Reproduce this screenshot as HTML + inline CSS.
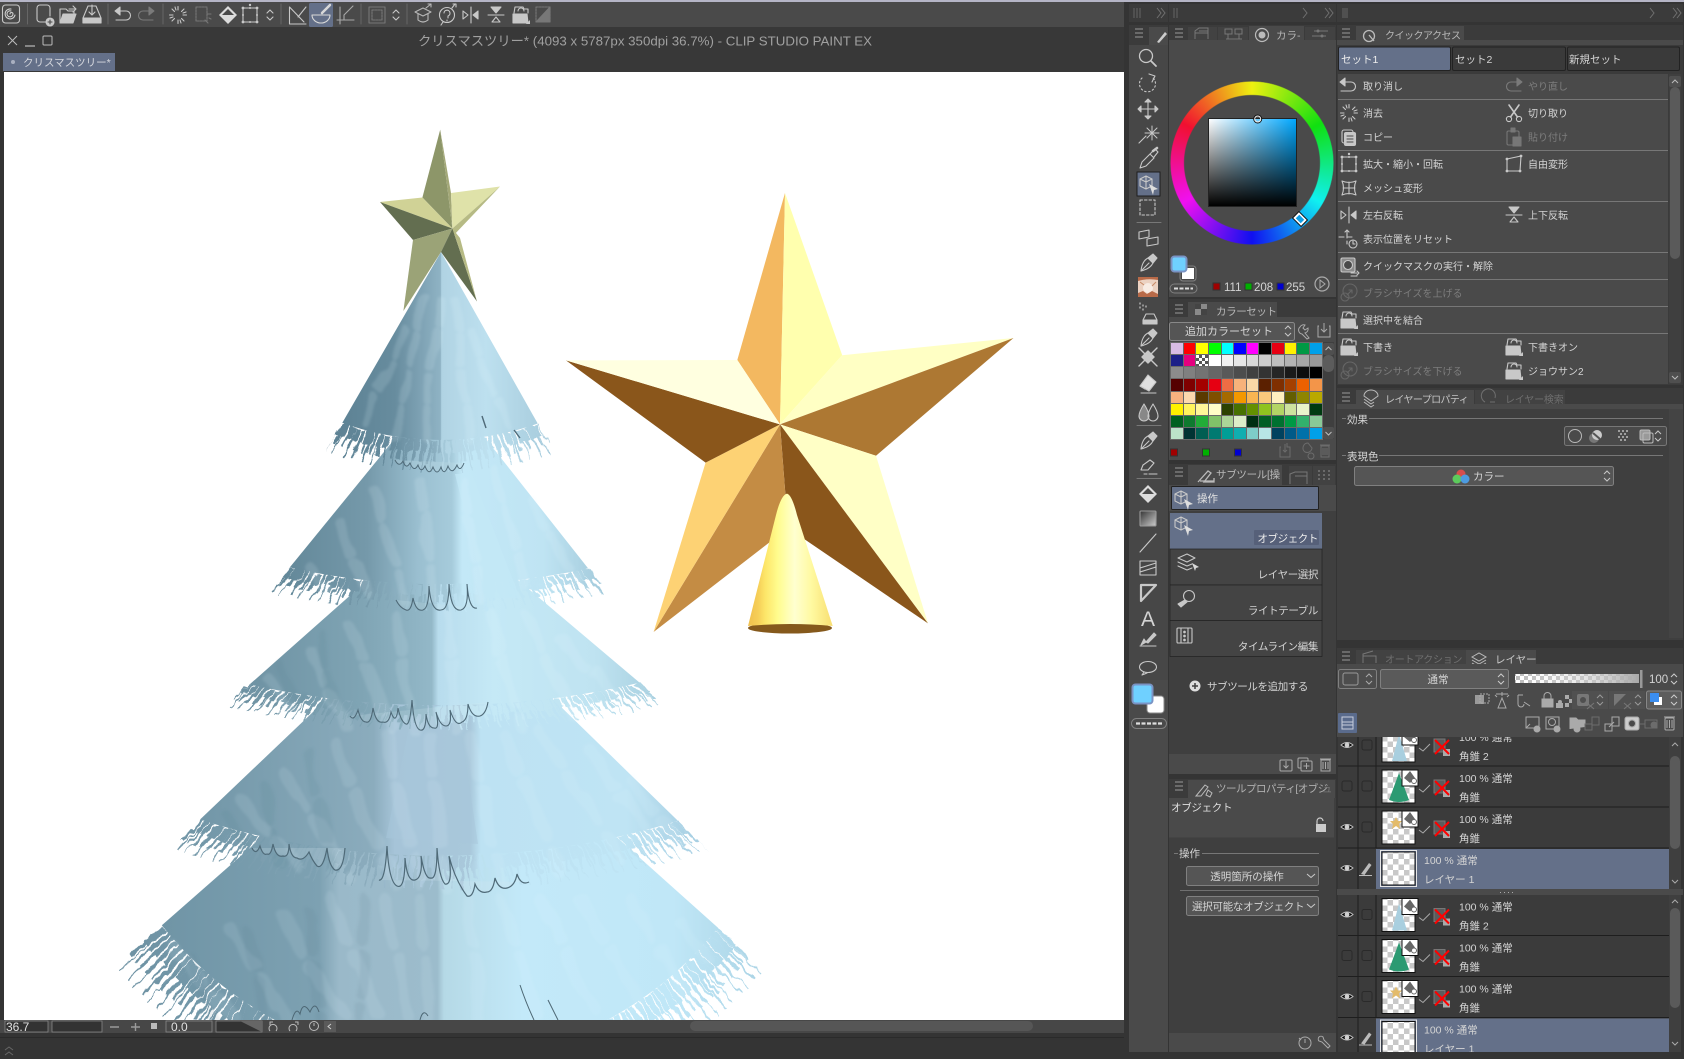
<!DOCTYPE html>
<html><head><meta charset="utf-8"><title>CLIP STUDIO PAINT EX</title>
<style>
html,body{margin:0;padding:0;background:#333;width:1684px;height:1059px;overflow:hidden}
svg{position:absolute;left:0;top:0}
text{font-family:"Liberation Sans","Noto Sans CJK JP",sans-serif;stroke:none;fill:#d4d4d4;font-size:10px}
.d{fill:#7d7d7d}.m{fill:#9a9a9a}
.wheel{position:absolute;left:1170px;top:81px;width:164px;height:164px;border-radius:50%;
background:conic-gradient(#eef010 0deg,#10e010 60deg,#10f0f0 120deg,#1010f0 180deg,#f010f0 240deg,#f01030 300deg,#eef010 360deg);
-webkit-mask:radial-gradient(circle,transparent 67.5px,#000 68.5px,#000 81px,transparent 82px);mask:radial-gradient(circle,transparent 67.5px,#000 68.5px,#000 81px,transparent 82px)}
.sq{position:absolute;left:1209px;top:119px;width:87px;height:87px;box-shadow:0 0 0 1px #222;background:linear-gradient(to top,#000,rgba(0,0,0,0)),linear-gradient(to right,#fff,#00a8ff)}
.pal{position:absolute;left:1170px;top:342px;width:153px;height:98px;background:#6a6a6a;display:grid;grid-template-columns:repeat(12,11.7px);grid-auto-rows:11.2px;gap:.95px;padding:1px;box-sizing:border-box}
.pal i{display:block}
.ck{background:conic-gradient(#555 25%,#fff 0 50%,#555 0 75%,#fff 0) 0 0/6px 6px}
</style></head><body>
<svg width="1684" height="1059" viewBox="0 0 1684 1059" xmlns="http://www.w3.org/2000/svg">
<defs>
<filter id="fth" filterUnits="userSpaceOnUse" x="90" y="240" width="720" height="800"><feTurbulence type="fractalNoise" baseFrequency="0.13 0.05" numOctaves="2" seed="7"/><feDisplacementMap in="SourceGraphic" scale="7" xChannelSelector="R" yChannelSelector="G"/></filter>
<filter id="fth2" filterUnits="userSpaceOnUse" x="90" y="240" width="720" height="800"><feTurbulence type="fractalNoise" baseFrequency="0.05 0.02" numOctaves="2" seed="3"/><feDisplacementMap in="SourceGraphic" scale="14" xChannelSelector="R" yChannelSelector="G"/><feGaussianBlur stdDeviation="1.2"/></filter>
<pattern id="chk" width="11" height="11" patternUnits="userSpaceOnUse" patternTransform="translate(1382,0)"><rect width="11" height="11" fill="#fff"/><rect width="5.5" height="5.5" fill="#c8c8c8"/><rect x="5.5" y="5.5" width="5.5" height="5.5" fill="#c8c8c8"/></pattern>
<linearGradient id="g1" gradientUnits="userSpaceOnUse" gradientTransform="translate(-441,0)" x1="326" x2="555" y1="0" y2="0"><stop offset="0" stop-color="#5b8092"/><stop offset=".3" stop-color="#678c9e"/><stop offset=".42" stop-color="#7fa3b5"/><stop offset=".5" stop-color="#8fb3c4"/><stop offset=".505" stop-color="#b0d3e3"/><stop offset=".7" stop-color="#bde0ef"/><stop offset="1" stop-color="#a4c9da"/></linearGradient>
<linearGradient id="g2" gradientUnits="userSpaceOnUse" gradientTransform="translate(-441,0)" x1="266" x2="604" y1="0" y2="0"><stop offset="0" stop-color="#5f8495"/><stop offset=".3" stop-color="#7599aa"/><stop offset=".45" stop-color="#9abfd0"/><stop offset=".55" stop-color="#a6cbdb"/><stop offset=".58" stop-color="#c3e8f7"/><stop offset=".82" stop-color="#bfe4f3"/><stop offset="1" stop-color="#a3cadb"/></linearGradient>
<linearGradient id="g3" gradientUnits="userSpaceOnUse" gradientTransform="translate(-441,0)" x1="221" x2="660" y1="0" y2="0"><stop offset="0" stop-color="#6a8e9f"/><stop offset=".32" stop-color="#7fa4b4"/><stop offset=".48" stop-color="#93b8c8"/><stop offset=".495" stop-color="#b8dced"/><stop offset=".62" stop-color="#c5e9f6"/><stop offset=".85" stop-color="#bfe3f1"/><stop offset="1" stop-color="#a7cfdf"/></linearGradient>
<linearGradient id="g4" gradientUnits="userSpaceOnUse" gradientTransform="translate(-441,0)" x1="169" x2="707" y1="0" y2="0"><stop offset="0" stop-color="#6e93a4"/><stop offset=".38" stop-color="#8bacbd"/><stop offset=".42" stop-color="#a6c4d8"/><stop offset=".56" stop-color="#a9c8db"/><stop offset=".58" stop-color="#bde2f3"/><stop offset=".85" stop-color="#bfe4f4"/><stop offset="1" stop-color="#a4cce0"/></linearGradient>
<linearGradient id="g5" gradientUnits="userSpaceOnUse" gradientTransform="translate(-441,0)" x1="116" x2="772" y1="0" y2="0"><stop offset="0" stop-color="#6c91a2"/><stop offset=".31" stop-color="#7da1b2"/><stop offset=".34" stop-color="#9ab9c9"/><stop offset=".49" stop-color="#9cbccc"/><stop offset=".5" stop-color="#b5d9e6"/><stop offset=".62" stop-color="#c3e9f9"/><stop offset=".85" stop-color="#c0e7f7"/><stop offset="1" stop-color="#a8d1e3"/></linearGradient>
<clipPath id="w1"><path d="M0,0L-230,502V700H228V510Z"/></clipPath>
<clipPath id="w2"><path d="M0,0L-350,802V1000H326V772Z"/></clipPath>
<clipPath id="w3"><path d="M0,0L-440,860V1100H438V816Z"/></clipPath>
<clipPath id="w4"><path d="M0,0L-544,932V1200H532V932Z"/></clipPath>
<clipPath id="w5"><path d="M0,0L-650,544V1200H662V564Z"/></clipPath>
<linearGradient id="cone" gradientUnits="userSpaceOnUse" x1="748" x2="833" y1="0" y2="0"><stop offset="0" stop-color="#f0c04e"/><stop offset=".12" stop-color="#f6cf58"/><stop offset=".2" stop-color="#fde568"/><stop offset=".35" stop-color="#fffc8e"/><stop offset=".55" stop-color="#ffffd0"/><stop offset=".75" stop-color="#fff9a0"/><stop offset="1" stop-color="#f8de70"/></linearGradient>
<linearGradient id="grd" x1="0" y1="0" x2="1" y2="1"><stop offset="0" stop-color="#333"/><stop offset="1" stop-color="#ccc"/></linearGradient>
<linearGradient id="op" x1="0" x2="1" y1="0" y2="0"><stop offset="0" stop-color="#fff" stop-opacity="0"/><stop offset="1" stop-color="#aaa"/></linearGradient>
<pattern id="opc" width="8" height="8" patternUnits="userSpaceOnUse"><rect width="8" height="8" fill="#fff"/><rect width="4" height="4" fill="#bbb"/><rect x="4" y="4" width="4" height="4" fill="#bbb"/></pattern>
<clipPath id="cv"><rect x="4" y="72" width="1120" height="948"/></clipPath>
<clipPath id="ls1"><rect x="1338" y="737" width="346" height="152"/></clipPath>
<clipPath id="ls2"><rect x="1338" y="895" width="346" height="157"/></clipPath>

<g id="ham" stroke="#9a9a9a" fill="none"><path d="M-4,-4H4M-4,0H4M-4,4H4"/></g>
<g id="undo"><path d="M-3,-8L-8,-4L-3,0Z" fill="#c8c8c8"/><path d="M-3,-4H3A4.5,4.5 0 0 1 3,5H-7"/></g>
<g id="redo"><path d="M3,-8L8,-4L3,0Z" fill="#7a7a7a" stroke="#7a7a7a"/><path d="M3,-4H-3A4.5,4.5 0 0 0 -3,5H7" stroke="#7a7a7a"/></g>
<g id="clear"><path d="M0,-8.5V-5M0,5V8.5M-8.5,0H-5M5,0H8.5M-6,-6L-3.5,-3.5M3.5,3.5L6,6M-6,6L-3.5,3.5M3.5,-3.5L6,-6M-3,-8L-2,-5M3,8L2,5M8,-3L5,-2M-8,3L-5,2"/></g>
<g id="cut"><circle cx="-5" cy="6" r="2.6"/><circle cx="5" cy="6" r="2.6"/><path d="M-3.5,4L5,-8M3.5,4L-5,-8" stroke-width="1.6"/></g>
<g id="copy"><rect x="-7" y="-7" width="11" height="13" rx="2"/><rect x="-4.5" y="-4.5" width="11" height="13" rx="1.5" fill="#c8c8c8"/><path d="M-2,-1H4M-2,2H4M-2,5H4" stroke="#4a4a4a"/></g>
<g id="paste" stroke="#777"><rect x="-7" y="-6" width="12" height="14" rx="1.5"/><rect x="-3" y="-9" width="4" height="4" fill="#777"/><rect x="-1" y="0" width="8" height="9" fill="#777"/></g>
<g id="xf"><rect x="-7" y="-7" width="14" height="14"/><g fill="#c8c8c8" stroke="none"><circle cx="-7" cy="-7" r="1.4"/><circle cx="7" cy="-7" r="1.4"/><circle cx="-7" cy="7" r="1.4"/><circle cx="7" cy="7" r="1.4"/><circle cx="0" cy="-10" r="1.2"/><circle cx="0" cy="-7" r="1"/><circle cx="-7" cy="0" r="1"/><circle cx="7" cy="0" r="1"/><circle cx="0" cy="7" r="1"/></g></g>
<g id="ff"><path d="M-7,-5L7,-8L6,7L-7,7Z"/><g fill="#c8c8c8" stroke="none"><circle cx="-7" cy="-5" r="1.4"/><circle cx="7" cy="-8" r="1.4"/><circle cx="-7" cy="7" r="1.4"/><circle cx="6" cy="7" r="1.4"/></g></g>
<g id="mesh"><path d="M-7,-7Q0,-4 7,-7Q4,0 7,7Q0,4 -7,7Q-4,0 -7,-7ZM0,-6V6M-6,0H6"/></g>
<g id="fh"><path d="M-8,-4V4L-3,0Z"/><path d="M0,-8V8"/><path d="M7,-4V4L2,0Z" fill="#c8c8c8"/></g>
<g id="fv"><path d="M-5,-8H5L0,-2Z" fill="#c8c8c8"/><path d="M-8,0H8"/><path d="M-4,7H4L0,2Z"/></g>
<g id="rst"><path d="M-2,-9V-1M-2,-9L-4,-7M-2,-9L0,-7M-10,-2H-5M3,-2H-1M-2,2V5"/><circle cx="4" cy="5" r="4"/><path d="M4,2V5H6"/></g>
<g id="qm"><rect x="-8" y="-8" width="14" height="14" rx="1.5" fill="#8a8a8a"/><circle cx="-1" cy="-1" r="4.5" fill="#4a4a4a"/><path d="M2,7H8M8,5L10,7L8,9M2,10H8"/></g>
<g id="bu" stroke="#666"><circle cx="1" cy="-2" r="7"/><circle cx="-4" cy="4" r="4"/><path d="M-2,2L3,-3M3,-3H0M3,-3V0"/></g>
<g id="fd"><path d="M-7,-2L-6,-8H2L3,-6L7,-6V-2" /><path d="M-8,8V-1H6L7,8Z" fill="#c8c8c8"/><path d="M-3,-4a3,3 0 0 1 6,0" /><path d="M5,9L9,9L9,5Z" fill="#c8c8c8" stroke="none"/></g>
<g id="spin"><path d="M-3,-2L0,-5L3,-2M-3,2L0,5L3,2"/></g>
<g id="eye"><path d="M-6,0Q0,-5 6,0Q0,5 -6,0Z" stroke="#bdbdbd"/><circle r="2.4" fill="#d0d0d0" stroke="none"/></g>
<g id="pen1"><path d="M-8,9Q-7,-1 -1,-4L4,1Q1,7 -8,9Z"/><path d="M-1,-4L4,-8L8,-4L4,1Z" fill="#c8c8c8"/><path d="M-8,9L0,1"/></g>
<g id="fillic"><path d="M0,-9L9,0L0,9L-9,0Z" fill="#dcdcdc" stroke="none"/><path d="M0,-6L6,0H-6Z" fill="#4a4a4a" stroke="none"/></g>
<g id="cube"><path d="M-9,-3l6,-3l6,3v7l-6,3l-6,-3zM-3,-6v13M-9,-3l6,3l6,-3"/><path d="M0,2l9,5l-4,1l-1,5z" fill="#dedede" stroke="none"/></g>
<g id="t-base"><rect x="1382" y="4" width="33" height="33" fill="url(#chk)" stroke="#111"/></g>
<g id="ov"><rect x="1402" y="4" width="16" height="16" fill="#fff" stroke="#111"/><path d="M1410,5L1415,12L1410,17L1404,12Z" fill="#666"/><circle cx="1414" cy="15" r="2.5" fill="#fff" stroke="#666"/></g>
<g id="rx"><path d="M1418,24l4,3l7,-7" stroke="#a8a8a8" transform="translate(1,-1)" fill="none"/><rect x="1434" y="14" width="11" height="13" fill="#5c5c5c" stroke="#777"/><rect x="1443" y="24" width="7" height="7" fill="#aaa" stroke="none"/><path d="M1435,15L1449,29M1449,15L1435,29" stroke="#f00" stroke-width="2" fill="none"/></g>
<g id="tr1"><path d="M1399,9L1392,36H1407Z" fill="#a9cfdf" stroke="none"/></g>
<g id="tr2"><path d="M1399,7L1389,34Q1399,38 1409,34Z" fill="#2c9a72" stroke="none"/></g>
<g id="tr3"><path d="M1396,10l2,4l4,0l-3,3l1,5l-4,-3l-4,3l1,-5l-3,-3l4,0Z" fill="#e3bb6a" stroke="none"/></g>
</defs>

<!-- base -->
<rect width="1684" height="1059" fill="#343434"/>
<rect width="1684" height="2" fill="#b5b5c6"/>
<rect y="2" width="1124" height="25" fill="#4a4a4a"/>
<rect y="27" width="1124" height="45" fill="#383838"/>
<rect x="3" y="53" width="112" height="18" fill="#647089"/>
<circle cx="13" cy="62" r="2" fill="#a9b0c0"/>
<text x="23" y="66" style="font-size:10.500px;fill:#d6d8de">クリスマスツリー*</text>
<text x="645" y="45.500" text-anchor="middle" style="font-size:13.300px;fill:#a0a0a0">クリスマスツリー* (4093 x 5787px 350dpi 36.7%)  - CLIP STUDIO PAINT EX</text>
<g stroke="#bbb" fill="none"><path d="M8,36L17,45M17,36L8,45"/><path d="M25,46H35" stroke-width="1.2"/><rect x="43" y="36" width="9" height="9" rx="1"/></g>

<!-- canvas -->
<rect x="4" y="72" width="1120" height="948" fill="#fff"/>
<g clip-path="url(#cv)">
<!-- small star -->
<g stroke="none">
<path d="M440.2,129.6L422.4,197.5L452.4,228.5Z" fill="#8d9669"/>
<path d="M440.2,129.6L451,193L452.4,228.5Z" fill="#a3a878"/>
<path d="M451,193L500,186.5L452.4,228.5Z" fill="#dfe2a9"/>
<path d="M500,186.5L453,236L452.4,228.5Z" fill="#b6ba84"/>
<path d="M380,202L422.4,197.5L452.4,228.5Z" fill="#d0d296"/>
<path d="M380,202L413,240L452.4,228.5Z" fill="#636e50"/>
<path d="M413,240L403.4,311L441,252L452.4,228.5Z" fill="#9ba377"/>
<path d="M452.4,228.5L441,252L477,301.5Z" fill="#636e50"/>
<path d="M452.4,228.5L477,301.5L460,238Z" fill="#b6ba84"/>
</g>
<!-- tree -->
<g stroke-linecap="butt" fill="none">
<!-- T5: apex 441,680 k 1.05, R 424, r0 364 -->
<g transform="translate(441,680) scale(1,1.05)"><g clip-path="url(#w5)"><circle r="364" fill="url(#g5)"/></g></g>
<g filter="url(#fth)"><g transform="translate(441,680) scale(1,1.05)"><g clip-path="url(#w5)">
<circle r="394" stroke="url(#g5)" stroke-width="60" stroke-dasharray="1 7 1.500 10 1 6 2 9"/>
<circle r="385" stroke="url(#g5)" stroke-width="42" stroke-dasharray="2.500 4 2 5 3 4.500"/>
<circle r="376" stroke="url(#g5)" stroke-width="24" stroke-dasharray="4.500 1.500 3.500 2 5.500 1.500"/>
</g></g></g>
<g filter="url(#fth2)" stroke-linecap="round">
<path d="M175,950L235,1020M230,930L290,1020M280,915L345,1020M330,900L380,1020M385,900L410,1020M420,900L430,1020M470,900L480,1020M500,900L540,1020M540,900L600,1020M580,900L650,1020M630,900L690,1000M680,925L730,985" stroke="#e4f6fd" stroke-width="12" stroke-dasharray="44 16 60 20" opacity=".1"/>
<path d="M190,960L215,1020M250,930L265,1020M310,910L320,1020M365,900L360,1020" stroke="#567c8e" stroke-width="11" stroke-dasharray="40 14" opacity=".12"/>
</g>
<path d="M292,1020q4,-14 8,-6q3,-14 10,-2q5,-12 9,0M420,1020q3,-12 8,-4M520,985q6,18 14,35M548,1000q5,10 10,20" stroke="#4d6774" stroke-width="1"/>
<!-- T4: apex 441,590 k .556, R 538, r0 478 -->
<g transform="translate(441,590) scale(1,.556)"><g clip-path="url(#w4)"><circle r="478" fill="url(#g4)"/></g></g>
<g filter="url(#fth)"><g transform="translate(441,590) scale(1,.556)"><g clip-path="url(#w4)">
<circle r="508" stroke="url(#g4)" stroke-width="60" stroke-dasharray="1 7 1.500 10 1 6 2 9"/>
<circle r="499" stroke="url(#g4)" stroke-width="42" stroke-dasharray="2.500 4 2 5 3 4.500"/>
<circle r="490" stroke="url(#g4)" stroke-width="24" stroke-dasharray="4.500 1.500 3.500 2 5.500 1.500"/>
</g></g></g>
<path d="M408,732L386,838L478,844L462,737Z" fill="#a8c6da" opacity=".55"/>
<g filter="url(#fth2)" stroke-linecap="round">
<path d="M240,800L300,868M285,770L350,880M335,745L395,885M385,735L420,885M430,735L445,885M470,735L500,880M505,735L560,870M540,730L620,860M590,750L660,850M630,780L680,845" stroke="#e4f6fd" stroke-width="12" stroke-dasharray="40 14 54 18" opacity=".11"/>
<path d="M225,815L250,850M265,785L280,865M310,755L330,870" stroke="#567c8e" stroke-width="10" stroke-dasharray="36 12" opacity=".14"/>
</g>
<path d="M252,848q4,8 8,-2q3,10 7,8q4,2 6,-10q3,14 10,12q6,2 6,-12q2,14 8,14q6,4 12,-6q3,8 8,14q6,4 10,-18q2,18 8,22q8,2 10,-22M379,880q6,2 8,-34q2,36 10,40q8,4 8,-28q2,24 10,22q8,-2 6,-24q4,24 10,22q6,2 6,-30q2,30 8,36q8,2 4,-28q6,24 18,40q6,2 8,-12q4,10 12,8q6,0 8,-14q4,12 12,10q8,-2 10,-14q4,12 12,8" stroke="#4f6a78" stroke-width="1.200" fill="#d4e9f2" fill-opacity=".22"/>
<!-- T3: apex 441,515 k .453, R 475, r0 420 -->
<g transform="translate(441,515) scale(1,.453)"><g clip-path="url(#w3)"><circle r="420" fill="url(#g3)"/></g></g>
<g filter="url(#fth)"><g transform="translate(441,515) scale(1,.453)"><g clip-path="url(#w3)">
<circle r="447" stroke="url(#g3)" stroke-width="55" stroke-dasharray="1 7 1.500 10 1 6 2 9"/>
<circle r="439" stroke="url(#g3)" stroke-width="39" stroke-dasharray="2.500 4 2 5 3 4.500"/>
<circle r="431" stroke="url(#g3)" stroke-width="22" stroke-dasharray="4.500 1.500 3.500 2 5.500 1.500"/>
</g></g></g>
<g filter="url(#fth2)" stroke-linecap="round">
<path d="M270,680L300,720M310,650L345,725M350,625L390,728M395,615L415,730M450,615L455,730M490,615L520,725M525,615L575,715M560,640L620,700" stroke="#e4f6fd" stroke-width="11" stroke-dasharray="36 12 44 14" opacity=".12"/>
<path d="M280,665L300,700M320,635L335,700" stroke="#567c8e" stroke-width="10" stroke-dasharray="30 10" opacity=".13"/>
</g>
<path d="M350,716q4,6 8,-6q3,12 8,12q5,2 7,-14q3,16 10,14q6,2 8,-10q5,14 7,-4q3,14 8,16q4,2 6,-24q2,28 8,30q6,2 6,-16q2,14 8,14q6,2 2,-16q4,14 10,14q6,0 4,-16q6,18 12,12q6,-2 6,-18q4,14 12,12q6,-2 8,-14" stroke="#4f6a78" stroke-width="1.100" fill="#d4e9f2" fill-opacity=".2"/>
<!-- T2: apex 441,382 k .535, R 428, r0 378 -->
<g transform="translate(441,382) scale(1,.535)"><g clip-path="url(#w2)"><circle r="378" fill="url(#g2)"/></g></g>
<g filter="url(#fth)"><g transform="translate(441,382) scale(1,.535)"><g clip-path="url(#w2)">
<circle r="403" stroke="url(#g2)" stroke-width="50" stroke-dasharray="1 7 1.500 10 1 6 2 9"/>
<circle r="395" stroke="url(#g2)" stroke-width="35" stroke-dasharray="2.500 4 2 5 3 4.500"/>
<circle r="388" stroke="url(#g2)" stroke-width="20" stroke-dasharray="4.500 1.500 3.500 2 5.500 1.500"/>
</g></g></g>
<path d="M455,474L486,598L520,598L472,474Z" fill="#c3e8f7" opacity=".7"/>
<g filter="url(#fth2)" stroke-linecap="round">
<path d="M310,565L330,598M340,525L370,600M375,490L405,600M420,480L432,605M465,480L480,600M495,470L530,595M530,500L575,580" stroke="#e4f6fd" stroke-width="10" stroke-dasharray="30 10 38 12" opacity=".13"/>
</g>
<path d="M396,600q4,8 10,10q5,2 7,-12q3,14 10,12q6,-2 6,-24q2,26 12,24q8,0 8,-26q2,28 12,26q8,-2 6,-26q2,26 10,24" stroke="#4f6a78" stroke-width="1.100" fill="#d4e9f2" fill-opacity=".2"/>
<!-- T1: apex 441,252 k .793, R 277, r0 237 -->
<g transform="translate(441,252) scale(1,.793)"><g clip-path="url(#w1)"><circle r="237" fill="url(#g1)"/></g></g>
<g filter="url(#fth)"><g transform="translate(441,252) scale(1,.793)"><g clip-path="url(#w1)">
<circle r="257" stroke="url(#g1)" stroke-width="40" stroke-dasharray="1 7 1.500 10 1 6 2 9"/>
<circle r="251" stroke="url(#g1)" stroke-width="28" stroke-dasharray="2.500 4 2 5 3 4.500"/>
<circle r="245" stroke="url(#g1)" stroke-width="16" stroke-dasharray="4.500 1.500 3.500 2 5.500 1.500"/>
</g></g></g>
<g filter="url(#fth2)" stroke-linecap="round">
<path d="M422,300L395,440M441,300L425,445M455,300L470,440M470,330L510,430M405,330L360,430" stroke="#e4f6fd" stroke-width="8" stroke-dasharray="26 8 32 10" opacity=".14"/>
</g>
<path d="M395,460q4,8 8,1q3,9 7,2q4,10 8,2q3,9 7,1q4,11 8,1q4,10 8,0q3,10 7,-1q4,10 9,-1q3,8 7,-2" stroke="#4f6a78" stroke-width="1" fill="#d4e9f2" fill-opacity=".2"/>
<path d="M482,416l4,12M514,430l6,8" stroke="#4f6a78" stroke-width="1.400"/>
</g>
<!-- big star -->
<g stroke="none">
<path d="M785,193L737.3,360L780,424.4Z" fill="#f3b860"/>
<path d="M785,193L842.2,355.2L780,424.4Z" fill="#ffffae"/>
<path d="M842.2,355.2L1013.5,338L780,424.4Z" fill="#ffffc4"/>
<path d="M1013.5,338L876,455.7L780,424.4Z" fill="#ad7833"/>
<path d="M876,455.7L928,623.4L780,424.4Z" fill="#ffffc6"/>
<path d="M928,623.4L788,528L780,424.4Z" fill="#8a561b"/>
<path d="M653.6,632L788,528L780,424.4Z" fill="#c48c44"/>
<path d="M653.6,632L705.6,462.6L780,424.4Z" fill="#fdd274"/>
<path d="M566,360.4L705.6,462.6L780,424.4Z" fill="#8a561b"/>
<path d="M566,360.4L737.3,360L780,424.4Z" fill="#ffffe0"/>
<ellipse cx="790" cy="628" rx="42" ry="5.5" fill="#85591c"/>
<path d="M787,493.6Q792,495 797,515L832.7,626Q790,622 748,626L776,515Q781,495 787,493.6Z" fill="url(#cone)"/>
</g>
</g>

<!-- status bar -->
<rect y="1020" width="1124" height="13" fill="#474747"/>
<rect y="1033" width="1124" height="4" fill="#343434"/><rect y="1037" width="1124" height="1" fill="#2a2a2a"/>
<rect x="5" y="1021" width="43" height="11" fill="#333" stroke="#888" stroke-width=".8"/>
<text x="6" y="1031" style="font-size:12px;fill:#e0e0e0">36.7</text>
<path d="M52,1021h50v11h-50z" fill="#333" stroke="#888" stroke-width=".8"/>
<text x="171" y="1031" style="font-size:12px;fill:#e0e0e0">0.0</text>
<rect x="166" y="1021" width="46" height="11" fill="none" stroke="#888" stroke-width=".8"/>
<path d="M216,1021h46v11h-46z" fill="#333" stroke="#888" stroke-width=".8"/>
<path d="M240,1021L262,1032V1021Z" fill="#666"/>
<path d="M110,1027h9M131,1027h9M135.5,1023v8" stroke="#9a9a9a" stroke-width="1.4"/>
<rect x="151" y="1023" width="6" height="6" fill="#bbb"/>
<rect x="690" y="1021" width="343" height="10" rx="5" fill="#565656"/>
<rect x="324" y="1021" width="12" height="11" fill="#5a5a5a"/>
<path d="M331,1024l-3,2.5l3,2.5" stroke="#ccc" fill="none"/>
<g fill="none" stroke="#bbb"><path d="M270,1031a4,4 0 1 1 6,0M270,1025v-3h3"/><path d="M290,1031a4,4 0 1 1 6,0M298,1025v-3h-3"/><circle cx="314" cy="1026" r="4.5"/><path d="M314,1023v3"/></g>
<path d="M5,1050l4,-3l4,3M5,1055l4,-3l4,3" stroke="#666" fill="none"/>

<!-- right base -->
<rect x="1124" y="2" width="560" height="1057" fill="#343434"/>
<rect x="1129" y="4" width="39" height="18" fill="#3b3b3b"/><rect x="1169" y="4" width="167" height="18" fill="#3b3b3b"/>
<rect x="1337" y="4" width="346" height="18" fill="#3b3b3b"/>
<path d="M1134,8v10M1137,8v10M1140,8v10M1174,8v10M1177,8v10M1343,8v10M1345,8v10M1347,8v10" stroke="#666"/>
<path d="M1157,8l4,5l-4,5M1161,8l4,5l-4,5M1303,8l4,5l-4,5M1325,8l4,5l-4,5M1329,8l4,5l-4,5M1650,8l4,5l-4,5M1673,8l4,5l-4,5M1677,8l4,5l-4,5" stroke="#707070" fill="none"/>

<!-- tool column -->
<rect x="1129" y="25" width="39" height="1027" fill="#474747"/>
<rect x="1129" y="25" width="39" height="20" fill="#3b3b3b"/>
<rect x="1149" y="27" width="19" height="18" fill="#4a4a4a"/>
<use href="#ham" x="1139" y="33"/>
<path d="M1157,42l8,-10l2,2l-8,9z" fill="#ccc"/>
<rect x="1137" y="172" width="23" height="24" fill="#647089" stroke="#1e1e1e"/>
<rect x="1129" y="680" width="39" height="372" fill="#4a4a4a"/>

<!-- color panel -->
<rect x="1169" y="25" width="167" height="272" fill="#4a4a4a"/>
<rect x="1169" y="25" width="167" height="15" fill="#3b3b3b"/>
<rect x="1188" y="27" width="29" height="13" fill="#424242"/><rect x="1218" y="27" width="30" height="13" fill="#424242"/>
<rect x="1249" y="26" width="55" height="14" fill="#4a4a4a"/><rect x="1305" y="27" width="30" height="13" fill="#424242"/>
<use href="#ham" x="1179" y="33"/>
<g fill="none" stroke="#777"><path d="M1195,39v-8l4,-3h9v11M1199,31h9M1195,33h13"/><path d="M1225,29h7v5h-7zM1235,29h7v5h-7zM1228,34v5M1239,34v5M1226,39h16"/><path d="M1314,31h14M1312,36h14"/><circle cx="1318" cy="31" r="1"/><circle cx="1322" cy="36" r="1"/></g>
<circle cx="1262" cy="35" r="6.5" fill="none" stroke="#bbb" stroke-width="1.2"/><circle cx="1262" cy="35" r="3.5" fill="#bbb"/>
<text x="1276" y="39" style="font-size:10.5px;fill:#b4b4b4">カラ-</text>
<!-- swatches -->
<rect x="1180" y="266" width="16" height="15" rx="3" fill="none" stroke="#808080"/><rect x="1182" y="268" width="12" height="11" fill="#fff"/>
<rect x="1171.5" y="256.5" width="15" height="15" rx="3" fill="#6fd0ff" stroke="#7a93c4" stroke-width="2"/>
<rect x="1170" y="284" width="27" height="9" rx="4.5" fill="none" stroke="#808080"/><path d="M1174,288.5h19" stroke="#ddd" stroke-width="2" stroke-dasharray="4 1.5"/>
<rect x="1213" y="283" width="7" height="7" fill="#a00000" stroke="#333"/><rect x="1245" y="283" width="7" height="7" fill="#00b000" stroke="#333"/><rect x="1277" y="283" width="7" height="7" fill="#0000d0" stroke="#333"/>
<text x="1224" y="291" style="font-size:11.5px">111</text><text x="1254" y="291" style="font-size:11.5px">208</text><text x="1286" y="291" style="font-size:11.5px">255</text>
<circle cx="1322" cy="284" r="7" fill="none" stroke="#aaa" stroke-width="1.2"/><path d="M1320,280l5,4l-5,4z" fill="none" stroke="#aaa"/>

<!-- color set -->
<rect x="1169" y="299" width="167" height="161" fill="#4a4a4a"/>
<rect x="1169" y="299" width="167" height="18" fill="#3b3b3b"/>
<rect x="1188" y="302" width="89" height="15" fill="#4a4a4a"/>
<use href="#ham" x="1179" y="309"/>
<rect x="1195" y="304" width="12" height="11" fill="#8a8a8a"/><rect x="1195" y="304" width="6" height="5" fill="#444"/><rect x="1201" y="309" width="6" height="6" fill="#444"/>
<text x="1216" y="315" style="font-size:10.5px;fill:#b8b8b8;letter-spacing:-.4px">カラーセット</text>
<rect x="1169.5" y="322.5" width="125" height="18" rx="2" fill="#555" stroke="#888"/>
<text x="1185" y="335" style="font-size:11px">追加カラーセット</text>
<use href="#spin" x="1288" y="331" stroke="#c8c8c8" fill="none"/>
<g fill="none" stroke="#aaa"><path d="M1300,327a4,4 0 0 1 5,-2l-2,3l2,2l3,-2a4,4 0 0 1 -3,5l4,5l-2,1l-5,-5a4,4 0 0 1 -2,-7z"/><path d="M1319,326h-1v11h12v-11h-1M1324,323v9M1321,329l3,3l3,-3"/></g>
<rect x="1323" y="342" width="11" height="97" fill="#3f3f3f"/>
<rect x="1323" y="343" width="11" height="12" rx="2" fill="#4f4f4f"/><rect x="1323" y="355" width="11" height="17" rx="5" fill="#5c5c5c"/><rect x="1323" y="427" width="11" height="12" rx="2" fill="#4f4f4f"/>
<path d="M1325.500,350l3,-3l3,3M1325.500,432l3,3l3,-3" stroke="#bbb" fill="none"/>
<rect x="1170.500" y="449" width="7" height="7" fill="#a00000" stroke="#333"/><rect x="1202.500" y="449" width="7" height="7" fill="#00b000" stroke="#333"/><rect x="1234.500" y="449" width="7" height="7" fill="#0000d0" stroke="#333"/>
<g fill="none" stroke="#6c6c6c"><path d="M1281,447h-1v10h10v-10h-3v-4M1285,444v8M1283,450l2,2l2,-2"/><path d="M1305,452a5,5 0 0 1 3,-9l4,5a5,5 0 0 1 -7,4z"/><circle cx="1311" cy="456" r="3"/><rect x="1321" y="446" width="8" height="11"/><path d="M1320,445h10M1323,448v7M1325,448v7M1327,448v7"/></g>

<!-- subtool -->
<rect x="1169" y="464" width="167" height="310" fill="#3f3f3f"/>
<rect x="1169" y="464" width="167" height="21" fill="#3b3b3b"/>
<rect x="1188" y="465" width="94" height="20" fill="#4a4a4a"/><rect x="1289" y="466" width="23" height="19" fill="#424242"/><rect x="1313" y="466" width="22" height="19" fill="#424242"/>
<use href="#ham" x="1179" y="472"/>
<path d="M1198,482l10,-11l3,2l-7,9h10v-4M1200,481h14" fill="none" stroke="#bbb" stroke-width="1.3"/>
<text x="1216" y="478" style="font-size:10.5px;fill:#b8b8b8;letter-spacing:-.3px">サブツール[操</text>
<g fill="none" stroke="#777"><path d="M1290,484v-10l5,-2h12v12M1295,476h12"/></g>
<g fill="#777"><circle cx="1319" cy="471" r="1"/><circle cx="1324" cy="471" r="1"/><circle cx="1329" cy="471" r="1"/><circle cx="1319" cy="475" r="1"/><circle cx="1324" cy="475" r="1"/><circle cx="1329" cy="475" r="1"/><circle cx="1319" cy="479" r="1"/><circle cx="1324" cy="479" r="1"/><circle cx="1329" cy="479" r="1"/></g>
<rect x="1169" y="485" width="167" height="26" fill="#4a4a4a"/>
<rect x="1171.500" y="486.500" width="147" height="23" rx="1" fill="#647089" stroke="#222"/>
<text x="1197" y="502" style="font-size:10.5px;fill:#e2e2e2">操作</text>
<rect x="1170" y="513" width="152" height="36" fill="#647089"/>
<rect x="1254" y="530" width="65" height="15" rx="1" fill="#566079"/>
<rect x="1170" y="549" width="152" height="36" fill="#444" stroke="#222" stroke-width=".7"/>
<rect x="1170" y="585" width="152" height="35.500" fill="#444" stroke="#222" stroke-width=".7"/>
<rect x="1170" y="620.500" width="152" height="36" fill="#444" stroke="#222" stroke-width=".7"/>
<text x="1318" y="542" text-anchor="end" style="font-size:10.5px;fill:#eee;letter-spacing:-.4px">オブジェクト</text>
<text x="1318" y="578" text-anchor="end" style="font-size:10.500px;letter-spacing:-.4px">レイヤー選択</text>
<text x="1318" y="614" text-anchor="end" style="font-size:10.500px;letter-spacing:-.4px">ライトテーブル</text>
<text x="1318" y="650" text-anchor="end" style="font-size:10.500px;letter-spacing:-.4px">タイムライン編集</text>
<circle cx="1195" cy="686" r="5.500" fill="#ddd"/><path d="M1192,686h6M1195,683v6" stroke="#3f3f3f" stroke-width="1.500"/>
<text x="1207" y="690" style="font-size:10.500px;letter-spacing:-.4px">サブツールを追加する</text>
<rect x="1169" y="754" width="167" height="20" fill="#4a4a4a"/>
<g fill="none" stroke="#aaa"><rect x="1280" y="760" width="12" height="11" rx="1"/><path d="M1286,761v7M1283.500,765.500l2.500,2.500l2.500,-2.500"/><rect x="1298" y="758" width="10" height="10" rx="1"/><rect x="1301" y="761" width="11" height="10" rx="1" fill="#4a4a4a"/><path d="M1306.500,763v6M1303.500,766h6"/><rect x="1321" y="760" width="9" height="11"/><path d="M1320,759h11M1323,762v7M1325.500,762v7M1328,762v7"/></g>

<!-- tool prop -->
<rect x="1169" y="779" width="167" height="273" fill="#3f3f3f"/>
<rect x="1169" y="779" width="167" height="19" fill="#3b3b3b"/>
<rect x="1188" y="780" width="147" height="18" fill="#4a4a4a"/>
<use href="#ham" x="1179" y="786"/>
<g fill="none" stroke="#bbb"><path d="M1196,796l9,-11l3,2l-7,9zM1208,790l4,3l-2,4l-4,-2z"/></g>
<text x="1216" y="792" style="font-size:10.500px;fill:#b0b0b0;letter-spacing:-.5px">ツールプロパティ[オブジ</text><text x="1322" y="792" style="font-size:10.500px;fill:#777">ュ</text>
<rect x="1169" y="798" width="165" height="39.500" fill="#4a4a4a"/>
<text x="1171" y="811" style="font-size:10.500px;fill:#e0e0e0;letter-spacing:-.3px">オブジェクト</text>
<rect x="1316" y="824" width="10" height="8" fill="#ccc"/><path d="M1317,824v-3a3,3 0 0 1 6,0" fill="none" stroke="#ccc" stroke-width="1.200"/>
<text x="1179" y="857" style="font-size:10.500px">操作</text>
<path d="M1174,853.500h4M1202,853.500h117" stroke="#777"/>
<rect x="1186.500" y="866.500" width="132" height="19" rx="2" fill="#555" stroke="#808080"/>
<text x="1247" y="880" text-anchor="middle" style="font-size:10.500px">透明箇所の操作</text>
<path d="M1307,874l4,3.500l4,-3.500" stroke="#ccc" fill="none"/>
<path d="M1180,890.500h139" stroke="#707070"/>
<rect x="1186.500" y="896.500" width="132" height="19" rx="2" fill="#555" stroke="#808080"/>
<text x="1192" y="910" style="font-size:10.500px;letter-spacing:-.3px">選択可能なオブジェクト</text>
<path d="M1307,904l4,3.500l4,-3.500" stroke="#ccc" fill="none"/>
<rect x="1169" y="1033" width="167" height="19" fill="#4a4a4a"/>
<g fill="none" stroke="#aaa"><circle cx="1305" cy="1043" r="6"/><path d="M1305,1039v4M1299,1038l2,2"/><path d="M1319,1037a3,3 0 0 1 4,0l1,3l6,6l-2,2l-6,-6l-3,-1a3,3 0 0 1 0,-4z"/></g>

<!-- quick access -->
<rect x="1337" y="25" width="346" height="360" fill="#3b3b3b"/>
<rect x="1356" y="26" width="108" height="15" fill="#4a4a4a"/>
<rect x="1337" y="40" width="346" height="5" fill="#4a4a4a"/>
<use href="#ham" x="1346" y="33"/>
<circle cx="1369" cy="36" r="5.500" fill="none" stroke="#bbb" stroke-width="1.300"/><path d="M1369,35l5,6" stroke="#bbb" stroke-width="1.300"/>
<text x="1385" y="39" style="font-size:10px;fill:#b8b8b8;letter-spacing:-.5px">クイックアクセス</text>
<rect x="1338.500" y="47" width="112" height="23.500" rx="1.500" fill="#647089" stroke="#222"/>
<rect x="1452.500" y="47" width="113" height="23.500" rx="1.500" fill="#3a3a3a" stroke="#222"/>
<rect x="1567.500" y="47" width="112" height="23.500" rx="1.500" fill="#3a3a3a" stroke="#222"/>
<text x="1341" y="63" style="font-size:10.500px;fill:#eee">セット1</text>
<text x="1455" y="63" style="font-size:10.500px">セット2</text>
<text x="1569" y="63" style="font-size:10.500px">新規セット</text>
<rect x="1338" y="74" width="330" height="310" fill="#4a4a4a"/>
<rect x="1669" y="74" width="12" height="310" fill="#3f3f3f"/>
<rect x="1669" y="76" width="12" height="11" rx="2" fill="#4f4f4f"/><rect x="1670" y="87" width="10" height="172" rx="5" fill="#5a5a5a"/><rect x="1669" y="372" width="12" height="11" rx="2" fill="#4f4f4f"/>
<path d="M1672,83l3,-3l3,3M1672,376l3,3l3,-3" stroke="#bbb" fill="none"/>
<path d="M1338,99.500h330M1338,150.500h330M1338,201.500h330M1338,252.500h330M1338,279.500h330M1338,306.500h330M1338,333.500h330" stroke="#777"/>
<g>
<text x="1363" y="90">取り消し</text><text x="1528" y="90" class="d">やり直し</text>
<text x="1363" y="117">消去</text><text x="1528" y="117">切り取り</text>
<text x="1363" y="141">コピー</text><text x="1528" y="141" class="d">貼り付け</text>
<text x="1363" y="168">拡大・縮小・回転</text><text x="1528" y="168">自由変形</text>
<text x="1363" y="192">メッシュ変形</text>
<text x="1363" y="219">左右反転</text><text x="1528" y="219">上下反転</text>
<text x="1363" y="243">表示位置をリセット</text>
<text x="1363" y="270">クイックマスクの実行・解除</text>
<text x="1363" y="297" class="d">ブラシサイズを上げる</text>
<text x="1363" y="324">選択中を結合</text>
<text x="1363" y="351">下書き</text><text x="1528" y="351">下書きオン</text>
<text x="1363" y="375" class="d">ブラシサイズを下げる</text><text x="1528" y="375">ジョウサン2</text>
</g>

<!-- layer property -->
<rect x="1337" y="388" width="346" height="252" fill="#3f3f3f"/>
<rect x="1337" y="388" width="346" height="19" fill="#3b3b3b"/>
<rect x="1356" y="390" width="118" height="19" fill="#4a4a4a"/><rect x="1475" y="390" width="90" height="15" fill="#424242"/>
<rect x="1337" y="404" width="346" height="5" fill="#4a4a4a"/>
<use href="#ham" x="1346" y="397"/>
<g fill="none" stroke="#bbb"><path d="M1364,396a7,6 0 0 1 14,0l-7,5zM1364,399l7,5l3,-2M1364,402l7,5l3,-2"/></g>
<text x="1385" y="403" style="font-size:10px;fill:#c4c4c4;letter-spacing:-.6px">レイヤープロパティ</text>
<text x="1505" y="403" style="font-size:10px;fill:#6f6f6f;letter-spacing:-.2px">レイヤー検索</text>
<path d="M1485,402a7,7 0 1 1 10,-4M1490,402l5,0" stroke="#6f6f6f" fill="none"/>
<rect x="1669" y="409" width="14" height="229" fill="#444"/>
<text x="1347" y="423" style="font-size:10.500px">効果</text>
<path d="M1342,418.500h4M1369,418.500h294" stroke="#777"/>
<rect x="1564.500" y="426.500" width="102" height="19" rx="2" fill="#4a4a4a" stroke="#777"/>
<circle cx="1575" cy="436" r="6.500" fill="none" stroke="#b8b8b8"/>
<circle cx="1594" cy="438" r="5" fill="#777"/><circle cx="1597" cy="435" r="5" fill="#ccc"/><path d="M1593,433l7,6" stroke="#555" stroke-width="2"/>
<g fill="#bbb"><circle cx="1619" cy="431" r="1"/><circle cx="1623" cy="431" r="1"/><circle cx="1627" cy="431" r="1"/><circle cx="1621" cy="434" r="1"/><circle cx="1625" cy="434" r="1"/><circle cx="1619" cy="437" r="1"/><circle cx="1623" cy="437" r="1"/><circle cx="1627" cy="437" r="1"/><circle cx="1621" cy="440" r="1"/><circle cx="1625" cy="440" r="1"/></g>
<rect x="1640" y="430" width="10" height="10" rx="1.500" fill="#999" stroke="#bbb"/><rect x="1643" y="433" width="10" height="10" rx="1.500" fill="none" stroke="#bbb"/>
<use href="#spin" x="1658" y="436" stroke="#c8c8c8" fill="none"/>
<text x="1347" y="460" style="font-size:10.500px">表現色</text>
<path d="M1342,455.500h4M1379,455.500h284" stroke="#777"/>
<rect x="1354.500" y="466.500" width="259" height="19" rx="2" fill="#555" stroke="#808080"/>
<circle cx="1461" cy="474" r="4.500" fill="#d64d4d"/><circle cx="1457" cy="479" r="4.500" fill="#5ccb5c"/><circle cx="1465" cy="479" r="4.500" fill="#4d9be0"/>
<text x="1473" y="480" style="font-size:10.500px">カラー</text>
<use href="#spin" x="1607" y="476" stroke="#c8c8c8" fill="none"/>

<!-- layer panel -->
<rect x="1337" y="648" width="346" height="16" fill="#3b3b3b"/>
<rect x="1356" y="650" width="110" height="14" fill="#424242"/><rect x="1466" y="650" width="70" height="14" fill="#4a4a4a"/>
<use href="#ham" x="1346" y="656"/>
<path d="M1363,663v-9l10,-3M1363,656h13v7" fill="none" stroke="#777"/>
<text x="1385" y="663" style="font-size:10px;fill:#6f6f6f;letter-spacing:-.3px">オートアクション</text>
<g fill="none" stroke="#bbb"><path d="M1472,657l7,-4l7,4l-7,4zM1472,660l7,4l7,-4M1472,663l7,4l7,-4"/></g>
<text x="1495" y="663" style="font-size:10.500px;fill:#c8c8c8">レイヤー</text>
<rect x="1337" y="664" width="346" height="73" fill="#4a4a4a"/>
<rect x="1338.500" y="669.500" width="38" height="19" rx="2" fill="#4d4d4d" stroke="#808080"/><rect x="1343" y="673" width="15" height="12" rx="2" fill="none" stroke="#999"/><use href="#spin" x="1369" y="679" stroke="#aaa" fill="none"/>
<rect x="1380.500" y="669.500" width="128" height="19" rx="2" fill="#5a5a5a" stroke="#808080"/>
<text x="1438" y="683" text-anchor="middle" style="font-size:10.500px">通常</text><use href="#spin" x="1501" y="679" stroke="#ccc" fill="none"/>
<rect x="1515" y="674" width="124" height="9" fill="url(#opc)"/><rect x="1515" y="674" width="124" height="9" fill="url(#op)"/>
<rect x="1640" y="670" width="2.500" height="18" fill="#999"/>
<text x="1649" y="683" style="font-size:11.500px">100</text><use href="#spin" x="1674" y="679" stroke="#ccc" fill="none"/>
<rect x="1338" y="713" width="19" height="20" rx="1" fill="#5a6b8c"/><path d="M1342,717h11v12h-11zM1342,722h11M1342,725h11" stroke="#c8cedb" fill="none"/>
<g fill="none" stroke="#aaa">
<rect x="1475" y="695" width="9" height="9" fill="#9a9a9a" stroke="none"/>
<rect x="1480" y="694" width="9" height="9" stroke-dasharray="2 1"/>
<path d="M1496,694h12M1502,692v4M1498,708l4,-10l4,10zM1497,697l-2,-2M1507,697l2,-2"/>
<path d="M1518,695v9a3,3 0 0 0 6,0M1518,695h5M1524,702l6,4"/>
<path d="M1544,699v-3a3.500,3.500 0 0 1 7,0v3"/><rect x="1542" y="699" width="11" height="8" fill="#aaa"/>
<g fill="#aaa" stroke="none"><circle cx="1560" cy="702" r="2"/><rect x="1556" y="703" width="7" height="5"/><rect x="1565" y="695" width="4" height="4"/><rect x="1569" y="699" width="4" height="4"/><rect x="1565" y="703" width="4" height="4"/></g>
</g>
<rect x="1572" y="691" width="36" height="18" fill="#505050"/><rect x="1609" y="691" width="36" height="18" fill="#505050"/>
<rect x="1577" y="694" width="12" height="12" rx="2" fill="#777"/><circle cx="1583" cy="700" r="3" fill="#4f4f4f"/><path d="M1587,703l7,6M1594,703l-7,6" stroke="#777"/><use href="#spin" x="1600" y="700" stroke="#999" fill="none"/>
<path d="M1614,694h12l-12,12z" fill="#777"/><path d="M1624,703l7,6M1631,703l-7,6" stroke="#777"/><use href="#spin" x="1638" y="700" stroke="#999" fill="none"/>
<rect x="1646.500" y="691" width="35" height="18" rx="2" fill="#5d5d5d" stroke="#888"/>
<rect x="1654" y="697" width="8" height="8" fill="#fff"/><rect x="1650" y="693" width="9" height="9" fill="#3b8ef0"/>
<use href="#spin" x="1674" y="700" stroke="#ccc" fill="none"/>
<g fill="none" stroke="#aaa">
<path d="M1526,717h13v11h-13zM1526,728l4,-4"/><circle cx="1537" cy="729" r="3" fill="#aaa"/>
<rect x="1546" y="717" width="13" height="12"/><circle cx="1552" cy="722" r="3.500"/><circle cx="1557" cy="729" r="3" fill="#aaa"/>
<path d="M1570,729v-11h6l2,2h7v7" fill="#aaa"/><circle cx="1577" cy="729" r="3" fill="#aaa"/>
<path d="M1585,724h7v6h-7zM1592,717h7v8h-7z" stroke="#6c6c6c"/>
<path d="M1605,724h7v7h-7zM1612,717h7v9h-7zM1609,727l5,-5"/>
<rect x="1625" y="717" width="14" height="13" rx="2" fill="#ccc"/><circle cx="1632" cy="723.500" r="3.500" fill="#4a4a4a"/>
<path d="M1645,720h12v8h-12zM1640,724h5" stroke="#6c6c6c"/><circle cx="1654" cy="725" r="3.500" fill="#6c6c6c" stroke="none"/>
<rect x="1665" y="718" width="9" height="12" rx="1"/><path d="M1664,717h11M1667,720v8M1669.500,720v8M1672,720v8"/>
</g>

<!-- layer lists -->
<rect x="1338" y="737" width="331" height="152" fill="#3b3b3b"/><rect x="1338" y="895" width="331" height="157" fill="#3b3b3b"/>
<rect x="1337" y="889" width="346" height="6" fill="#4a4a4a"/>
<path d="M1500,892.500h16" stroke="#aaa" stroke-dasharray="1 3"/>
<rect x="1669" y="737" width="12" height="152" fill="#3f3f3f"/><rect x="1669" y="895" width="12" height="157" fill="#3f3f3f"/>
<rect x="1670" y="756" width="10" height="93" rx="5" fill="#5a5a5a"/><rect x="1670" y="908" width="10" height="100" rx="5" fill="#5a5a5a"/>
<path d="M1672,746l3,-3l3,3M1672,880l3,3l3,-3M1672,903l3,-3l3,3M1672,1042l3,3l3,-3" stroke="#aaa" fill="none"/>
<g clip-path="url(#ls1)">
<g transform="translate(0,725)"><path d="M1338,41h331M1358,0v41M1376,0v41" stroke="#1e1e1e"/><use href="#eye" x="1347" y="20"/><rect x="1362" y="15" width="10" height="10" rx="2" fill="none" stroke="#2a2a2a"/><use href="#t-base"/><use href="#tr1"/><use href="#ov"/><use href="#rx"/><text x="1459" y="16" style="font-size:10.500px">100 % 通常</text><text x="1459" y="35" style="font-size:10.500px">角錐 2</text></g>
<g transform="translate(0,766)"><path d="M1338,41h331M1358,0v41M1376,0v41" stroke="#1e1e1e"/><rect x="1342" y="15" width="10" height="10" rx="2" fill="none" stroke="#2a2a2a"/><rect x="1362" y="15" width="10" height="10" rx="2" fill="none" stroke="#2a2a2a"/><use href="#t-base"/><use href="#tr2"/><use href="#ov"/><use href="#rx"/><text x="1459" y="16" style="font-size:10.500px">100 % 通常</text><text x="1459" y="35" style="font-size:10.500px">角錐</text></g>
<g transform="translate(0,807)"><path d="M1338,41h331M1358,0v41M1376,0v41" stroke="#1e1e1e"/><use href="#eye" x="1347" y="20"/><rect x="1362" y="15" width="10" height="10" rx="2" fill="none" stroke="#2a2a2a"/><use href="#t-base"/><use href="#tr3"/><use href="#ov"/><use href="#rx"/><text x="1459" y="16" style="font-size:10.500px">100 % 通常</text><text x="1459" y="35" style="font-size:10.500px">角錐</text></g>
<g transform="translate(0,848)"><rect x="1376" y="1" width="293" height="40" fill="#647089"/><path d="M1358,0v41" stroke="#1e1e1e"/><use href="#eye" x="1347" y="20"/><path d="M1359,27.500h13" stroke="#bbb"/><path d="M1361,26l8,-11l2.500,2l-7,10z" fill="#bbb"/><rect x="1380.500" y="2.500" width="36" height="36" fill="none" stroke="#e6e6e6"/><use href="#t-base"/><text x="1424" y="16" style="font-size:10.500px">100 % 通常</text><text x="1424" y="35" style="font-size:10.500px">レイヤー 1</text></g>
</g>
<g clip-path="url(#ls2)">
<g transform="translate(0,894.500)"><path d="M1338,41h331M1358,0v41M1376,0v41" stroke="#1e1e1e"/><use href="#eye" x="1347" y="20"/><rect x="1362" y="15" width="10" height="10" rx="2" fill="none" stroke="#2a2a2a"/><use href="#t-base"/><use href="#tr1"/><use href="#ov"/><use href="#rx"/><text x="1459" y="16" style="font-size:10.500px">100 % 通常</text><text x="1459" y="35" style="font-size:10.500px">角錐 2</text></g>
<g transform="translate(0,935.500)"><path d="M1338,41h331M1358,0v41M1376,0v41" stroke="#1e1e1e"/><rect x="1342" y="15" width="10" height="10" rx="2" fill="none" stroke="#2a2a2a"/><rect x="1362" y="15" width="10" height="10" rx="2" fill="none" stroke="#2a2a2a"/><use href="#t-base"/><use href="#tr2"/><use href="#ov"/><use href="#rx"/><text x="1459" y="16" style="font-size:10.500px">100 % 通常</text><text x="1459" y="35" style="font-size:10.500px">角錐</text></g>
<g transform="translate(0,976.500)"><path d="M1338,41h331M1358,0v41M1376,0v41" stroke="#1e1e1e"/><use href="#eye" x="1347" y="20"/><rect x="1362" y="15" width="10" height="10" rx="2" fill="none" stroke="#2a2a2a"/><use href="#t-base"/><use href="#tr3"/><use href="#ov"/><use href="#rx"/><text x="1459" y="16" style="font-size:10.500px">100 % 通常</text><text x="1459" y="35" style="font-size:10.500px">角錐</text></g>
<g transform="translate(0,1017.500)"><rect x="1376" y="1" width="293" height="40" fill="#647089"/><path d="M1358,0v41" stroke="#1e1e1e"/><use href="#eye" x="1347" y="20"/><path d="M1359,27.500h13" stroke="#bbb"/><path d="M1361,26l8,-11l2.500,2l-7,10z" fill="#bbb"/><rect x="1380.500" y="2.500" width="36" height="36" fill="none" stroke="#e6e6e6"/><use href="#t-base"/><text x="1424" y="16" style="font-size:10.500px">100 % 通常</text><text x="1424" y="35" style="font-size:10.500px">レイヤー 1</text></g>
</g>

<!-- icon layer -->
<g fill="none" stroke="#c8c8c8" stroke-width="1.1" stroke-linecap="round" stroke-linejoin="round">
<!-- toolbar -->
<rect x="309" y="3" width="24" height="24" rx="1.500" fill="#647089" stroke="none"/>
<path d="M27.500,4v20M108,4v20M163,4v20M281,4v20M361,4v20M407,4v20" stroke="#666" stroke-width="1"/>
<rect x="2.500" y="5" width="17" height="18" rx="3"/><path d="M11,9a5,5 0 1 0 4,6M11,11a3,3 0 1 0 2,3a1.500,1.500 0 0 0 -3,0" stroke="#d0d0d0"/>
<path d="M46,22h-6a3,3 0 0 1 -3,-3v-11a3,3 0 0 1 3,-3h7a3,3 0 0 1 3,3v8"/><circle cx="50" cy="22" r="4" fill="#c8c8c8"/><path d="M48,22h4M50,20v4" stroke="#4a4a4a"/>
<path d="M60,23v-14h6l2,2h6v3" /><path d="M60,23l3,-9h13l-3,9z" fill="#c8c8c8"/><path d="M69,9h6M73,6l3,3l-3,3"/>
<path d="M83,18l5,-12h8l5,12v5h-18z"/><rect x="83" y="18" width="18" height="5" fill="#c8c8c8"/><path d="M92,5v10M89,12l3,3l3,-3"/>
<use href="#undo" x="123" y="15"/><use href="#redo" x="146" y="15"/>
<use href="#clear" x="178" y="15"/>
<g stroke="#777"><rect x="196" y="7" width="11" height="14" stroke-dasharray="2 1"/><path d="M207,14h4M205,20l3,3M209,18l2,1"/></g>
<use href="#fillic" x="228" y="15"/>
<use href="#xf" x="250" y="15"/><use href="#spin" x="270" y="15"/>
<path d="M289.500,7V24H306M289.500,7L304,22M298,17l8,-10"/>
<path d="M312,15h18a9,8 0 0 1 -18,0" stroke="#d8d8d8"/><path d="M322,13l8,-8" stroke-width="2.500" stroke="#d8d8d8"/>
<path d="M340,7V24M337,20h17M344,15l9,-9M344,15v5" stroke="#a8a8a8"/>
<rect x="369" y="7" width="16" height="16" stroke="#777"/><rect x="372" y="10" width="10" height="10" stroke="#777" stroke-dasharray="2 1"/>
<use href="#spin" x="396" y="15"/>
<path d="M415,12l8,-4l8,4l-8,4zM418,14v6q5,4 10,0v-6M426,8l5,-4M428,4h3v3" stroke="#b8b8b8"/>
<circle cx="447" cy="15" r="7.500"/><path d="M444,13a3,3 0 1 1 4,3v2M447,20v1M452,8l3,-4M453,4h3v3M443,22l-2,3"/>
<use href="#fh" x="471" y="15"/><use href="#fv" x="496" y="15"/><use href="#fd" x="521" y="15"/>
<g stroke="#777"><rect x="536" y="7" width="14" height="15" stroke-dasharray="2 1"/><path d="M536,22l14,-15V22Z" fill="#777"/></g>
<!-- tool col -->
<circle cx="1146" cy="56" r="6.500" stroke-width="1.300"/><path d="M1151,61l5,5" stroke-width="1.800"/>
<path d="M1142,78a8,8 0 1 0 11,0" stroke-dasharray="1.500 2.500"/><path d="M1149,74l6,2l-3,6" />
<path d="M1148,99v20M1138,109h20M1148,99l-3,3h6zM1148,119l-3,-3h6zM1138,109l3,-3v6zM1158,109l-3,-3v6z" fill="#c8c8c8"/>
<path d="M1139,143l7,-7" /><path d="M1152,126v14M1145,133h14M1147,128l10,10M1157,128l-10,10" stroke-width="1"/>
<path d="M1140,168l2,-6l8,-8l4,4l-8,8zM1150,154l5,-5l3,3l-4,5" /><path d="M1153,151l4,-3" stroke-width="2.500"/>
<use href="#cube" x="1149" y="182"/>
<rect x="1140" y="200" width="15" height="15" stroke-dasharray="2.500 2"/>
<path d="M1137,222.500h24" stroke="#777"/>
<path d="M1139,232l10,-2v7l-10,2zM1147,239l11,-2v7l-11,2z"/>
<use href="#pen1" x="1149" y="262"/>
<use href="#pen1" x="1149" y="337"/><use href="#pen1" x="1149" y="440"/>
<path d="M1146,314h8l3,6v4h-14v-4zM1143,321h14" /><rect x="1144" y="320" width="12" height="4" fill="#c8c8c8"/><path d="M1140,303v1M1143,305v1M1146,306v1M1140,307v1M1143,309v1" stroke-width="1.200"/>
<path d="M1139,348l18,18M1157,348l-18,18M1148,351l6,6l-6,6l-6,-6z" fill="#c8c8c8" stroke-width="1.400"/>
<path d="M1140,386l8,-11l8,7l-7,9z" fill="#e0e0e0"/><path d="M1145,389l-5,-3M1141,393h15"/>
<path d="M1144,404q-5,8 -5,12a5,5 0 0 0 10,0q0,-4 -5,-12z" fill="#888"/><path d="M1153,404q-5,8 -5,12a5,5 0 0 0 10,0q0,-4 -5,-12z"/>
<path d="M1137,425.500h24M1137,478.500h24" stroke="#777"/>
<path d="M1141,470l2,-5l7,-5l4,3l-6,7zM1149,474h8M1144,474h3" />
<use href="#fillic" x="1148" y="494"/>
<rect x="1140" y="511" width="16" height="15" rx="1" fill="url(#grd)" stroke="#999"/>
<path d="M1140,552l16,-18"/>
<path d="M1140,561h16v14h-16zM1140,568l16,-5M1140,572l16,-5"/>
<path d="M1141,585h15L1141,601Z" stroke-width="2.200"/>
<text x="1148" y="626" text-anchor="middle" style="font-size:21px;fill:#d4d4d4">A</text>
<path d="M1140,646h16M1141,645l3,-6l2,3l-5,3zM1146,642l8,-9l2,2l-8,8z" fill="#c8c8c8"/>
<ellipse cx="1148" cy="667" rx="8.500" ry="5.500"/><path d="M1144,672l-2,3l5,-2"/>
<!-- subtool icons -->
<use href="#cube" x="1184" y="497"/>
<use href="#cube" x="1184" y="523"/>
<path d="M1178,558l9,-4l8,4l-8,4zM1178,562l9,4l5,-2M1178,566l9,4l5,-2"/><path d="M1192,563l7,4l-3,1l-1,3z" fill="#d8d8d8" stroke="none"/>
<circle cx="1189" cy="596" r="5.500"/><path d="M1185,600l-7,4l3,3l6,-5" fill="#c8c8c8"/>
<rect x="1177" y="628" width="15" height="15" rx="1"/><path d="M1181,628v15M1188,628v15" /><circle cx="1184.500" cy="632" r=".8" fill="#c8c8c8"/><circle cx="1184.500" cy="636" r=".8" fill="#c8c8c8"/><circle cx="1184.500" cy="640" r=".8" fill="#c8c8c8"/>
<!-- quick access icons -->
<use href="#undo" x="1348" y="86"/><use href="#redo" x="1514" y="86"/><use href="#clear" x="1349" y="113"/><use href="#cut" x="1514" y="113"/>
<use href="#copy" x="1349" y="137"/><use href="#paste" x="1514" y="137"/>
<use href="#xf" x="1349" y="164"/><use href="#ff" x="1514" y="164"/><use href="#mesh" x="1349" y="188"/>
<use href="#fh" x="1349" y="215"/><use href="#fv" x="1514" y="215"/><use href="#rst" x="1349" y="239"/>
<use href="#qm" x="1349" y="266"/><use href="#bu" x="1349" y="293"/><use href="#fd" x="1349" y="320"/>
<use href="#fd" x="1349" y="347"/><use href="#fd" x="1514" y="347"/><use href="#bu" x="1349" y="371"/><use href="#fd" x="1514" y="371"/>
</g>
<!-- thumb in tool col -->
<rect x="1138" y="277" width="20" height="20" fill="#ecd2c2"/><circle cx="1148" cy="288" r="5" fill="#f8ece4"/><path d="M1138,277h20v3q-10,-2 -20,1zM1138,293l5,-2l4,3l5,-3l6,3v3h-20z" fill="#b86a48"/><path d="M1140,282l4,3M1156,282l-4,4" stroke="#c98a66"/>
<!-- FG/BG tool col -->
<rect x="1147" y="696" width="17" height="17" rx="3" fill="#fff" stroke="#888"/>
<rect x="1132.500" y="684.500" width="20" height="19" rx="3" fill="#6fd0ff" stroke="#7a93c4" stroke-width="2"/>
<rect x="1131.500" y="718.500" width="35" height="10" rx="5" fill="none" stroke="#808080"/><path d="M1136,723.500h26" stroke="#ddd" stroke-width="2.200" stroke-dasharray="4 1.500"/>
</svg>

<div class="wheel"></div>
<div class="sq"></div>
<svg width="1684" height="1059" viewBox="0 0 1684 1059" style="pointer-events:none">
<circle cx="1257.700" cy="119" r="4" fill="none" stroke="#111" stroke-width="1"/><circle cx="1257.700" cy="119" r="3" fill="none" stroke="#eee" stroke-width="1"/>
<g transform="translate(1300,219) rotate(45)"><rect x="-6" y="-4.500" width="12" height="9" fill="#fff" stroke="#111"/><rect x="-3.500" y="-2.500" width="7" height="5" fill="#10a0e8"/></g>
</svg>
<div class="pal">
<i style="background:#d9bce4"></i><i style="background:#f00"></i><i style="background:#ff0"></i><i style="background:#0f0"></i><i style="background:#0ff"></i><i style="background:#00f"></i><i style="background:#f0f"></i><i style="background:#000"></i><i style="background:#e60012"></i><i style="background:#fff100"></i><i style="background:#009944"></i><i style="background:#00a0e9"></i>
<i style="background:#1d2088"></i><i style="background:#e4007f"></i><i class="ck"></i><i style="background:#fff"></i><i style="background:#f2f2f2"></i><i style="background:#e6e6e6"></i><i style="background:#d9d9d9"></i><i style="background:#ccc"></i><i style="background:#bfbfbf"></i><i style="background:#b3b3b3"></i><i style="background:#a6a6a6"></i><i style="background:#999"></i>
<i style="background:#8c8c8c"></i><i style="background:#808080"></i><i style="background:#737373"></i><i style="background:#666"></i><i style="background:#595959"></i><i style="background:#4d4d4d"></i><i style="background:#404040"></i><i style="background:#333"></i><i style="background:#262626"></i><i style="background:#1a1a1a"></i><i style="background:#0d0d0d"></i><i style="background:#000"></i>
<i style="background:#550000"></i><i style="background:#7f0000"></i><i style="background:#a40000"></i><i style="background:#e60012"></i><i style="background:#ee6c44"></i><i style="background:#f7b27a"></i><i style="background:#fad8a6"></i><i style="background:#5b2000"></i><i style="background:#7f2f00"></i><i style="background:#a54000"></i><i style="background:#ec6100"></i><i style="background:#f39549"></i>
<i style="background:#f7b27f"></i><i style="background:#fcd9ae"></i><i style="background:#5a3a00"></i><i style="background:#7f4f00"></i><i style="background:#a66a00"></i><i style="background:#f39800"></i><i style="background:#f8b551"></i><i style="background:#fac97c"></i><i style="background:#fff0bf"></i><i style="background:#635e00"></i><i style="background:#8e8500"></i><i style="background:#b9a900"></i>
<i style="background:#fff100"></i><i style="background:#fff45c"></i><i style="background:#fff799"></i><i style="background:#fffdc7"></i><i style="background:#2c4200"></i><i style="background:#477100"></i><i style="background:#649000"></i><i style="background:#8fc31f"></i><i style="background:#b3d465"></i><i style="background:#cee29f"></i><i style="background:#e9f3cc"></i><i style="background:#003a10"></i>
<i style="background:#006020"></i><i style="background:#0f7a2f"></i><i style="background:#22ac38"></i><i style="background:#80c269"></i><i style="background:#acd598"></i><i style="background:#dcedc8"></i><i style="background:#002e12"></i><i style="background:#005e24"></i><i style="background:#007130"></i><i style="background:#009944"></i><i style="background:#32b16c"></i><i style="background:#89c997"></i>
<i style="background:#bce2c9"></i><i style="background:#003333"></i><i style="background:#005e52"></i><i style="background:#007a71"></i><i style="background:#009e96"></i><i style="background:#10aeb0"></i><i style="background:#7ecdc8"></i><i style="background:#b8e6e6"></i><i style="background:#00425f"></i><i style="background:#005a88"></i><i style="background:#0071a9"></i><i style="background:#00a0e9"></i>
</div>
</body></html>
